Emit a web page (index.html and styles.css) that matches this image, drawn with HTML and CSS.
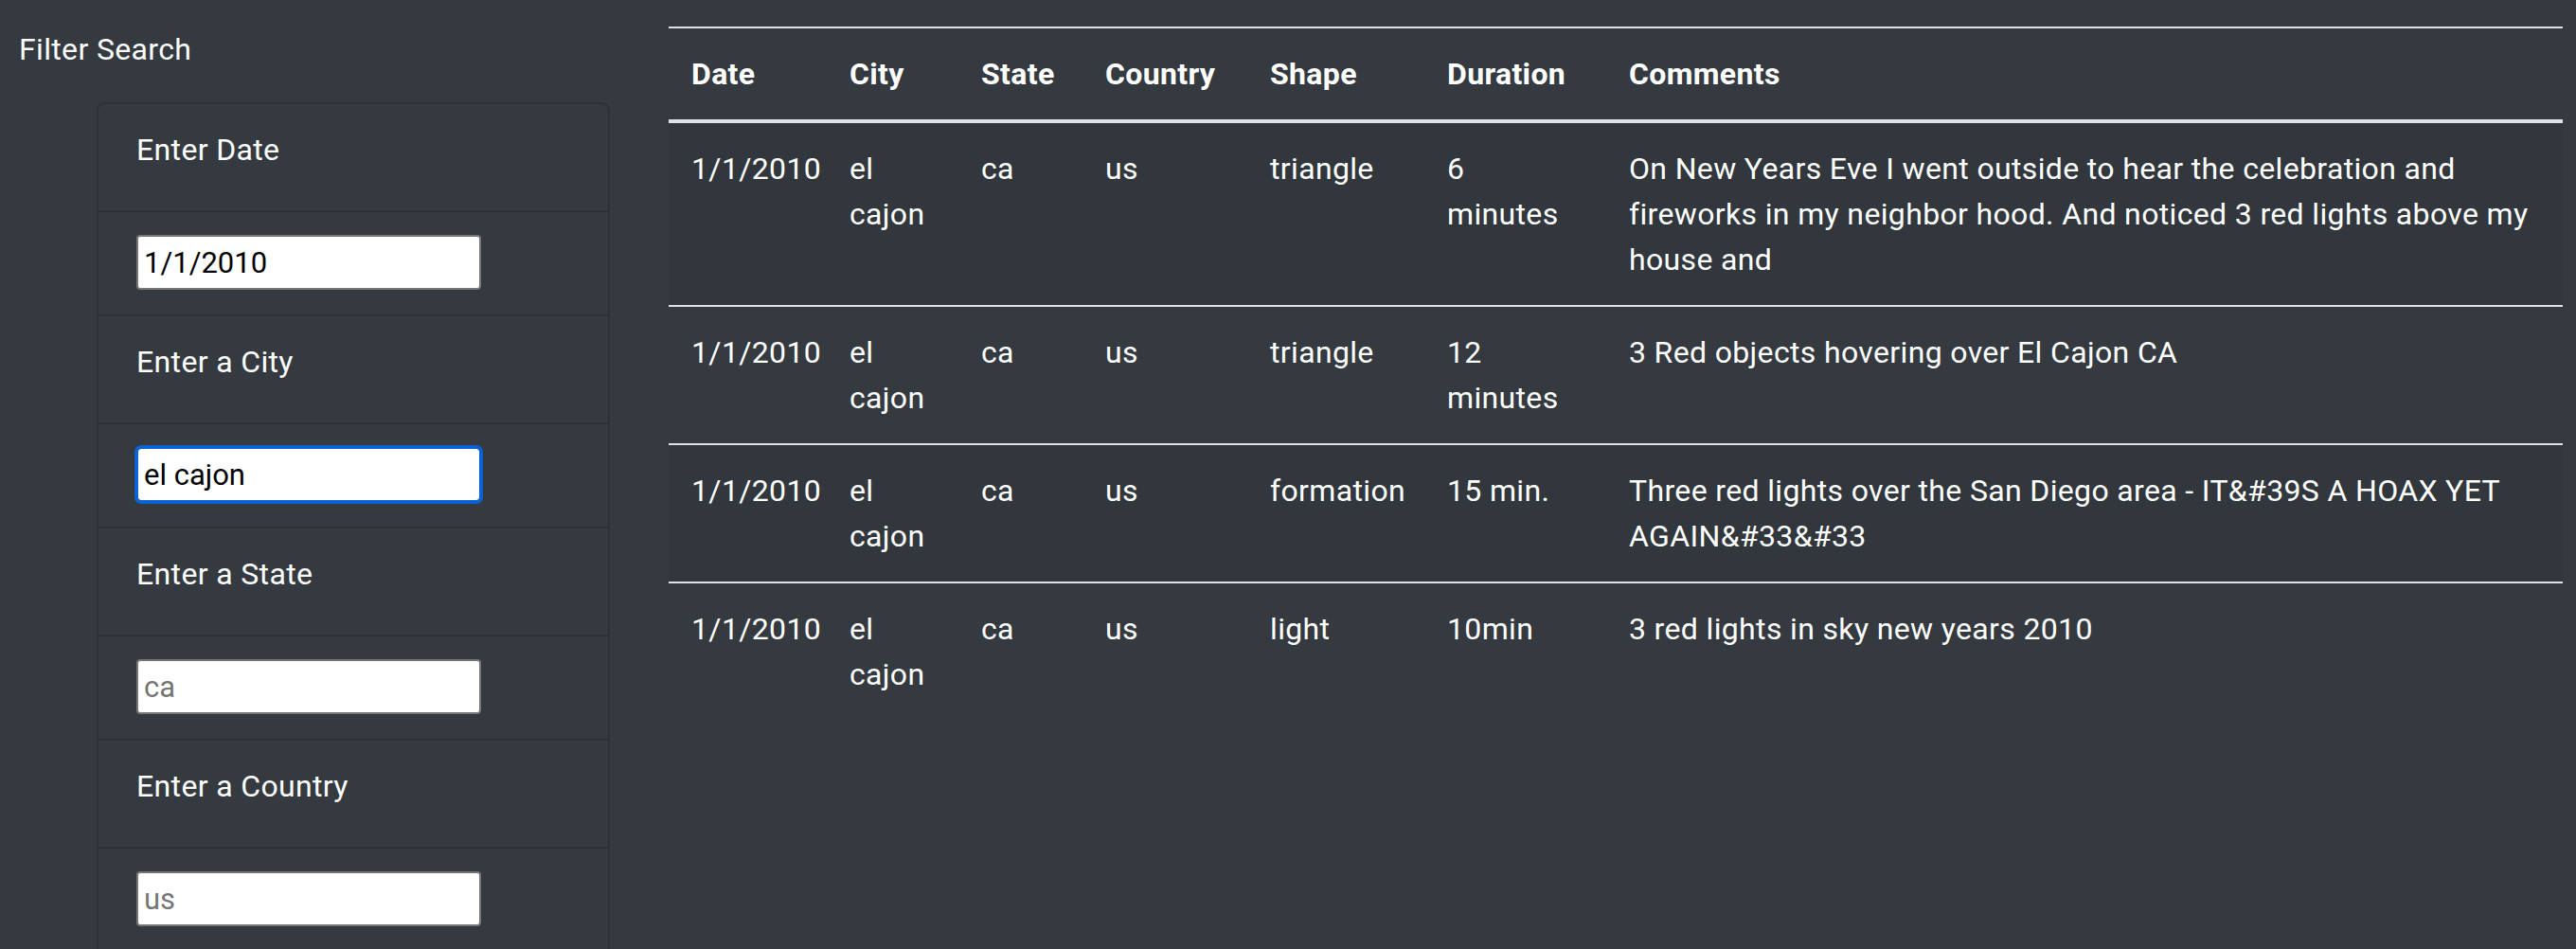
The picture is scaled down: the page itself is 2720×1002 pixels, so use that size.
FILE: index.html
```html
<!DOCTYPE html>
<html lang="en">
<head>
<meta charset="utf-8">
<title>UFO Sightings</title>
<link rel="stylesheet" href="styles.css">
</head>
<body>
<div class="page">
  <aside class="sidebar">
    <div class="filter-title">Filter Search</div>
    <div class="card">
      <ul class="list-group">
        <li class="list-item"><label class="field-label" for="datetime">Enter Date</label></li>
        <li class="list-item input-item"><input class="field" id="datetime" type="text" value="1/1/2010"></li>
        <li class="list-item"><label class="field-label" for="city">Enter a City</label></li>
        <li class="list-item input-item"><input class="field field-focus" id="city" type="text" value="el cajon"></li>
        <li class="list-item"><label class="field-label" for="state">Enter a State</label></li>
        <li class="list-item input-item"><input class="field" id="state" type="text" placeholder="ca"></li>
        <li class="list-item"><label class="field-label" for="country">Enter a Country</label></li>
        <li class="list-item input-item"><input class="field" id="country" type="text" placeholder="us"></li>
      </ul>
    </div>
  </aside>
  <main class="main">
    <table class="data-table">
      <colgroup>
        <col class="c-date">
        <col class="c-city">
        <col class="c-state">
        <col class="c-country">
        <col class="c-shape">
        <col class="c-duration">
        <col class="c-comments">
      </colgroup>
      <thead>
        <tr>
          <th>Date</th>
          <th>City</th>
          <th>State</th>
          <th>Country</th>
          <th>Shape</th>
          <th>Duration</th>
          <th>Comments</th>
        </tr>
      </thead>
      <tbody>
        <tr>
          <td>1/1/2010</td>
          <td>el cajon</td>
          <td>ca</td>
          <td>us</td>
          <td>triangle</td>
          <td class="cell-duration">6 minutes</td>
          <td>On New Years Eve I went outside to hear the celebration and fireworks in my neighbor hood. And noticed 3 red lights above my house and</td>
        </tr>
        <tr>
          <td>1/1/2010</td>
          <td>el cajon</td>
          <td>ca</td>
          <td>us</td>
          <td>triangle</td>
          <td class="cell-duration">12 minutes</td>
          <td>3 Red objects hovering over El Cajon CA</td>
        </tr>
        <tr>
          <td>1/1/2010</td>
          <td>el cajon</td>
          <td>ca</td>
          <td>us</td>
          <td>formation</td>
          <td class="cell-duration">15 min.</td>
          <td>Three red lights over the San Diego area - IT&amp;#39S A HOAX YET AGAIN&amp;#33&amp;#33</td>
        </tr>
        <tr>
          <td>1/1/2010</td>
          <td>el cajon</td>
          <td>ca</td>
          <td>us</td>
          <td>light</td>
          <td class="cell-duration">10min</td>
          <td>3 red lights in sky new years 2010</td>
        </tr>
      </tbody>
    </table>
  </main>
</div>
</body>
</html>
```

FILE: styles.css
```css
html, body {
  margin: 0;
  padding: 0;
  height: 100%;
  overflow: hidden;
}

body {
  background: #343a40;
  color: #ffffff;
  font-family: Roboto, "Liberation Sans", Arial, sans-serif;
  font-size: 32px;
  line-height: 48px;
  letter-spacing: 0.35px;
}

.page {
  display: flex;
  align-items: flex-start;
}

.sidebar {
  flex: none;
  width: 706px;
}

.filter-title {
  padding: 28px 0 0 20px;
  line-height: 48px;
}

.card {
  margin: 32px 0 0 102px;
  width: 542px;
  box-sizing: border-box;
  border: 2px solid rgba(0, 0, 0, 0.13);
  border-radius: 8px;
  overflow: hidden;
}

.list-group {
  list-style: none;
  margin: 0;
  padding: 0;
}

.list-item {
  padding: 24px 40px;
  border-bottom: 2px solid rgba(0, 0, 0, 0.13);
}

.input-item {
  padding-bottom: 26px;
}

.field-label {
  display: block;
  margin-bottom: 16px;
  line-height: 48px;
}

.field {
  display: block;
  box-sizing: border-box;
  width: 364px;
  height: 58px;
  margin: 0;
  padding: 0 6px;
  border: 2px solid #767676;
  border-radius: 4px;
  background: #ffffff;
  color: #000000;
  font-family: Roboto, "Liberation Sans", Arial, sans-serif;
  font-size: 31px;
  letter-spacing: 0;
}

.field::placeholder {
  color: #757575;
}

.field-focus {
  outline: 4px solid #0b63d3;
  outline-offset: -2px;
  border-radius: 5px;
}

.main {
  flex: none;
  width: 2000px;
  padding-top: 28px;
}

.data-table {
  width: 2000px;
  table-layout: fixed;
  border-collapse: collapse;
  color: #ffffff;
}

.c-date { width: 167px; }
.c-city { width: 139px; }
.c-state { width: 131px; }
.c-country { width: 174px; }
.c-shape { width: 187px; }
.c-duration { width: 192px; }
.c-comments { width: 1010px; }

.data-table th,
.data-table td {
  padding: 24px;
  text-align: left;
  vertical-align: top;
  border-top: 2px solid #dee2e6;
}

.data-table th {
  font-weight: 700;
  border-bottom: 4px solid #dee2e6;
}

.data-table td.cell-duration {
  padding-right: 44px;
}

.data-table tbody tr:nth-child(odd) {
  background: rgba(0, 0, 0, 0.05);
}
```
